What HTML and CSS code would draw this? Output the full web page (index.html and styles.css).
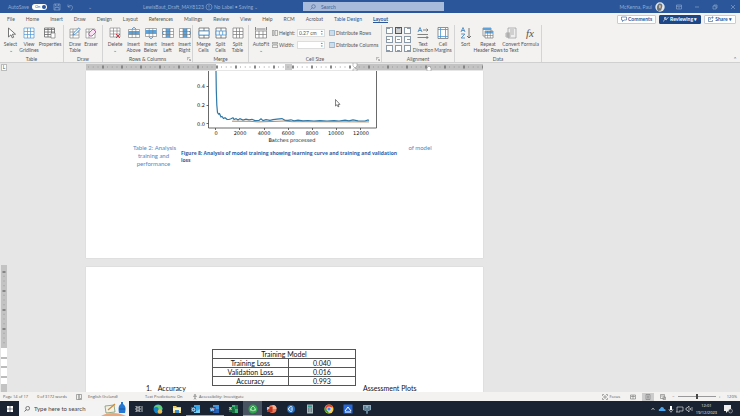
FILE: index.html
```html
<!DOCTYPE html>
<html lang="en">
<head>
<meta charset="utf-8">
<title>Word document</title>
<link rel="stylesheet" href="styles.css">
</head>
<body>
<svg class="defs" aria-hidden="true">
  <symbol id="grid" viewBox="0 0 12 12"><path d="M1 1h10v10H1z" fill="#fff"/><path d="M1 1h10v10H1zM1 4.500h10M1 7.500h10M4.500 1v10M7.500 1v10" fill="none" stroke="currentColor" stroke-width=".7"/></symbol>
  <symbol id="insert" viewBox="0 0 12 12"><path d="M.5 2.500h11v8H.5z" fill="#fff" stroke="#777" stroke-width=".6"/><path d="M.5 4h11v3.500H.5z" fill="#5ba3dc"/><path d="M4.200 2.500v8M7.800 2.500v8M.5 7.500h11" stroke="#777" stroke-width=".6"/></symbol>
  <symbol id="insertcol" viewBox="0 0 12 12"><path d="M.5 1.500h11v9H.5z" fill="#fff" stroke="#777" stroke-width=".6"/><path d="M4 1.500h4v9H4z" fill="#5ba3dc"/><path d="M.5 4.500h11M.5 7.500h11M8 1.500v9M4 1.500v9" stroke="#777" stroke-width=".6"/></symbol>
</svg>

<header class="titlebar">
  <div class="quick">
    <span>AutoSave</span>
    <button class="toggle" aria-label="AutoSave on"><span>On</span><i></i></button>
    <svg class="i8" viewBox="0 0 8 8"><path d="M1 1h6v6H1zM2.500 1v2h3V1M2 7V4.500h4V7" class="ln"/></svg>
    <svg class="i8 undo" viewBox="0 0 8 8"><path d="M1 1.500v2.500h2.500M1 4c2-3 6-1 4 2L4 7.500" class="ln"/></svg>
    <span class="more">⌄</span>
  </div>
  <div class="docname">LewisBaut_Draft_MAY8123 <svg class="i8" viewBox="0 0 8 8"><circle cx="4" cy="4" r="3" class="ln"/><path d="M4 2v2.500M4 5.300v.6" class="ln"/></svg> No Label • Saving ⌄</div>
  <label class="find"><svg class="i6" viewBox="0 0 6 6"><circle cx="3.500" cy="2.500" r="1.800" class="ln"/><path d="M2.200 3.800L.5 5.500" class="ln"/></svg><input placeholder="Search" aria-label="Search"></label>
  <div class="account">
    <span>McKenna, Paul</span>
    <svg class="i10" viewBox="0 0 10 10"><circle cx="5" cy="5" r="4.700" fill="#dfe5e8"/><path d="M4 1.500c3-.6 4 1.500 3 4L6 8.500 3 9C1 6 2 3 4 1.500z" fill="#6c7478"/><path d="M4 3l2 .5-.5 3L4 6z" fill="#d9b7a2"/></svg>
    <svg class="i8 win" viewBox="0 0 8 8"><path d="M1.500 2h5v4h-5zM1.500 3.300h5M4 4v1.500" class="ln"/></svg>
    <svg class="i8 win" viewBox="0 0 8 8"><path d="M2 4h4" class="ln"/></svg>
    <svg class="i8 win" viewBox="0 0 8 8"><path d="M2 3h3v3H2zM3 3V2h3v3H5" class="ln"/></svg>
    <svg class="i8 win" viewBox="0 0 8 8"><path d="M2 2l4 4M6 2L2 6" class="ln"/></svg>
  </div>
</header>

<nav class="tabs">
  <a href="#">File</a><a href="#">Home</a><a href="#">Insert</a><a href="#">Draw</a><a href="#">Design</a><a href="#">Layout</a><a href="#">References</a><a href="#">Mailings</a><a href="#">Review</a><a href="#">View</a><a href="#">Help</a><a href="#">RCM</a><a href="#">Acrobat</a><a href="#" class="ctx">Table Design</a><a href="#" class="ctx on">Layout</a>
  <div class="actions">
    <button><svg class="i6" viewBox="0 0 6 6"><path d="M.5 1h5v3H3L1.500 5.500V4h-1z" class="ln"/></svg>Comments</button>
    <button class="review"><svg class="i6" viewBox="0 0 6 6"><path d="M.5 5.500C1 3 3 3 4 4M1.500 1.500h1.500v1.500H1.500zM3.500 3.500L5.500 1" class="ln"/></svg>Reviewing ▾</button>
    <button><svg class="i6" viewBox="0 0 6 6"><path d="M2.500 1.500H.5v4h4V4M2 4c0-2 1-2.500 3-2.500M4 .5l1.300 1L4 2.500" class="ln"/></svg>Share ▾</button>
  </div>
</nav>

<section class="ribbon">
  <div class="group g-table">
    <div class="tools">
      <button><svg class="ic" viewBox="0 0 12 12"><path d="M3.500 1v9L6 7.800l1.200 3 1.500-.6L7.400 7.200H10.500z" fill="#fff" stroke="#555" stroke-width=".8"/></svg>Select<br>⌄</button>
      <button class="w20"><svg class="ic blue"><use href="#grid"/></svg>View Gridlines</button>
      <button class="w22"><svg class="ic" viewBox="0 0 12 12"><path d="M.5 1h10v9H.5z" fill="#fff"/><path d="M.5 1h10v9H.5zM.5 2.500h10M.5 5h10M.5 7.500h10M4 1v9M7.500 1v9" fill="none" stroke="#666" stroke-width=".8"/><path d="M7 6h4v5H7z" fill="#fff" stroke="#666" stroke-width=".6"/></svg>Properties</button>
    </div><h2>Table</h2>
  </div>
  <div class="group g-draw">
    <div class="tools">
      <button class="w18"><svg class="ic" viewBox="0 0 12 12"><path d="M1 2h9v9H1zM1 5h9M1 8h9M4 2v9" fill="#fff" stroke="#777" stroke-width=".6"/><path d="M4 8l1-2.500L10 .8l1.300 1.300L6.500 7z" fill="#fff" stroke="#3883c4" stroke-width=".8"/></svg>Draw Table</button>
      <button class="w14"><svg class="ic" viewBox="0 0 12 12"><path d="M1 2h9v9H1zM1 5h9M4 2v9" fill="#fff" stroke="#777" stroke-width=".6"/><path d="M4 6l4-4 3 3-4 4H5L4 8z" fill="#f7e3f2" stroke="#a44d97" stroke-width=".8"/></svg>Eraser</button>
    </div><h2>Draw</h2>
  </div>
  <div class="group g-rows">
    <div class="tools">
      <button class="w20"><svg class="ic" viewBox="0 0 12 12"><path d="M1 1h10v9H1zM1 4h10M1 7h10M4.500 1v9M8 1v9" fill="#fff" stroke="#777" stroke-width=".6"/><path d="M7 7l4 4M11 7l-4 4" stroke="#d43c4c" stroke-width="1"/></svg>Delete<br>⌄</button>
      <button><svg class="ic" viewBox="0 0 12 12"><use href="#insert"/><path d="M4 2l2-1.700L8 2" class="ar"/></svg>Insert Above</button>
      <button><svg class="ic" viewBox="0 0 12 12"><use href="#insert" y="-1"/><path d="M4 10l2 1.700L8 10" class="ar"/></svg>Insert Below</button>
      <button><svg class="ic" viewBox="0 0 12 12"><use href="#insertcol"/><path d="M2 4L.4 6 2 8" class="ar"/></svg>Insert Left</button>
      <button><svg class="ic" viewBox="0 0 12 12"><use href="#insertcol"/><path d="M10 4l1.600 2L10 8" class="ar"/></svg>Insert Right</button>
    </div><h2>Rows &amp; Columns</h2>
    <svg class="launch" viewBox="0 0 5 5"><path d="M.5 4V.5H4M2 2l2.500 2.500M4.500 2.500v2h-2" class="gr"/></svg>
  </div>
  <div class="group g-merge">
    <div class="tools">
      <button><svg class="ic" viewBox="0 0 12 12"><path d="M1 1h10v10H1zM1 4h10M1 8h10M6 1v3M6 8v3" fill="#fff" stroke="#666" stroke-width=".8"/><path d="M1 4h10v4H1z" fill="#fff" stroke="#4a96d2" stroke-width=".8"/></svg>Merge Cells</button>
      <button><svg class="ic" viewBox="0 0 12 12"><path d="M1 1h10v10H1zM6 1v10" fill="#fff" stroke="#666" stroke-width=".8"/><path d="M1 4h10v4H1zM4.300 4v4M7.700 4v4" fill="#fff" stroke="#4a96d2" stroke-width=".8"/></svg>Split Cells</button>
      <button><svg class="ic"><use href="#grid"/></svg>Split Table</button>
    </div><h2>Merge</h2>
  </div>
  <div class="group g-size">
    <div class="tools">
      <button class="w20"><svg class="ic" viewBox="0 0 12 12"><path d="M.5 4h11v7H.5zM.5 7.500h11M4 4v7M8 4v7" fill="#fff" stroke="#777" stroke-width=".7"/><path d="M.5 0v3.500M11.500 0v3.500M1.500 2h9" stroke="#555" stroke-width=".7"/></svg>AutoFit<br>⌄</button>
      <div class="fields">
        <label for="h"><svg class="i6" viewBox="0 0 6 6"><path d="M.4.4h1.500v5.200H.4zM3 .4h2.600v5.200H3z" class="gr"/></svg>Height:</label>
        <span class="spin"><input id="h" value="0.27 cm"><i>▴<br>▾</i></span>
        <button class="dist"><svg class="i6" viewBox="0 0 6 6"><path d="M.4.400h5.200v5.200H.4zM.4 2h5.200M.4 4h5.200" class="bl"/></svg>Distribute Rows</button>
        <label for="w"><svg class="i6" viewBox="0 0 6 6"><path d="M.4.4h5.200v1.500H.4zM.4 3h5.200v2.600H.4z" class="gr"/></svg>Width:</label>
        <span class="spin"><input id="w" value=""><i>▴<br>▾</i></span>
        <button class="dist"><svg class="i6" viewBox="0 0 6 6"><path d="M.4.400h5.200v5.200H.4zM2 .4v5.200M4 .4v5.200" class="bl"/></svg>Distribute Columns</button>
      </div>
    </div><h2>Cell Size</h2>
    <svg class="launch" viewBox="0 0 5 5"><path d="M.5 4V.5H4M2 2l2.500 2.500M4.500 2.500v2h-2" class="gr"/></svg>
  </div>
  <div class="group g-align">
    <div class="tools">
      <div class="aligns">
        <button aria-label="Top left"><i class="t l"></i></button><button class="sel" aria-label="Top centre"><i class="t"></i></button><button aria-label="Top right"><i class="t r"></i></button>
        <button aria-label="Middle left"><i class="l"></i></button><button aria-label="Middle centre"><i></i></button><button aria-label="Middle right"><i class="r"></i></button>
        <button aria-label="Bottom left"><i class="b l"></i></button><button aria-label="Bottom centre"><i class="b"></i></button><button aria-label="Bottom right"><i class="b r"></i></button>
      </div>
      <button class="w20"><svg class="ic" viewBox="0 0 12 12"><path d="M1 5l2-4.500L5 5M1.800 3.500h2.400" class="ar"/><path d="M6 3h5M9.500 1.500L11 3 9.500 4.500M.5 7.500h10.500M.5 10.500h10.500M9.500 9L11 10.500 9.500 12" fill="none" stroke="#666" stroke-width=".8"/></svg>Text Direction</button>
      <button class="w20"><svg class="ic" viewBox="0 0 12 12"><path d="M1 .500h10v11H1z" fill="#fff" stroke="#777" stroke-width=".8"/><path d="M3.500 1v10M8.500 1v10M1 2.500h10M1 9.500h10" stroke="#4a96d2" stroke-width=".8"/></svg>Cell Margins</button>
    </div><h2>Alignment</h2>
  </div>
  <div class="group g-data">
    <div class="tools">
      <button><svg class="ic" viewBox="0 0 12 12"><path d="M1 5l2-4.500L5 5M1.700 3.500h2.600" class="ar"/><path d="M1.200 7h3.600L1.200 11h3.800" class="ar" /><path d="M9 1v10M7 9l2 2 2-2" fill="none" stroke="#555" stroke-width=".8"/></svg>Sort</button>
      <button class="w28"><svg class="ic" viewBox="0 0 12 12"><path d="M1 1h8v8H1z" fill="#fff" stroke="#777" stroke-width=".7"/><path d="M1 1h8v2H1z" fill="#5ba3dc"/><path d="M3 4h8v7H3z" fill="#fff" stroke="#777" stroke-width=".7"/><path d="M3 4h8v2.500H3z" fill="#5ba3dc"/><path d="M3 8.500h8M5.600 4v7M8.300 4v7" stroke="#777" stroke-width=".6"/></svg><span>Repeat<br>Header Rows</span></button>
      <button class="w18"><svg class="ic" viewBox="0 0 12 12"><path d="M3 1h8v10H3z" fill="#eee" stroke="#999" stroke-width=".7"/><path d="M5 3h4M5 5h4M6 7h3M1 6h4v4H1zM1 8h4M3 6v4" fill="none" stroke="#999" stroke-width=".7"/></svg>Convert to Text</button>
      <button class="w20"><span class="fx">fx</span>Formula</button>
    </div><h2>Data</h2>
  </div>
  <button class="collapse" aria-label="Collapse ribbon">⌃</button>
</section>

<div class="ruler">
  <button class="tabstop" aria-label="Tab stop">L</button>
  <svg class="scale" viewBox="0 0 397 8" aria-hidden="true">
    <path d="M0 1h397v6H0z" fill="#c3c3c3"/><path d="M130 1h139v6H130z" fill="#fff"/><path d="M199 1h7v6h-7z" fill="#c9c9c9"/>
    <path d="M2 4h395" stroke="#999" stroke-width="1" stroke-dasharray="1 3.750"/>
    <path d="M16 4h381" stroke="#858585" stroke-width="3" stroke-dasharray="2 17"/>
    <path d="M267 0h4v3l-2 2-2-2zM267 6h4v2h-4zM341 5l2-2 2 2v3h-4z" fill="#fff" stroke="#888" stroke-width=".5"/>
  </svg>
</div>

<main class="workspace">
  <svg class="vruler" viewBox="0 0 6 127" aria-hidden="true"><path d="M0 0h6v127H0z" fill="#c3c3c3"/><path d="M0 83h6v36H0z" fill="#fff"/><path d="M0 92h6v2H0zM0 101h6v2H0zM0 111h6v2H0z" fill="#bbb"/><path d="M3 6v76" stroke="#999" stroke-width="1" stroke-dasharray="1 3.750"/><path d="M3 6v76" stroke="#858585" stroke-width="3" stroke-dasharray="2 17"/></svg>
  <div class="pages">
    <article class="page first">
      <svg class="chart" viewBox="194 71 186 73">
        <path d="M208.500 71v57h168V71" fill="none" stroke="#444" stroke-width=".8"/>
        <path d="M206.500 86.500h2M206.500 105.500h2M206.500 123.500h2M215.500 128v2M239.500 128v2M264.500 128v2M288.500 128v2M312.500 128v2M336.500 128v2M360.500 128v2" stroke="#444" stroke-width=".8"/>
        <path d="M216 71L216.300 90 216.800 105 217.500 112.500 218.500 114 219.500 113.500 221 117 222 116.500 223.500 118.500 225 117.800 227 119.300 229 119.500 231 118.800 233 117.800 234 119.500 236 118.600 238 120 240 118.600 243 120 246 119.200 249 119.800 252 119.300 255 120.600 259 120.400 261 118.800 263 120.600 266 119.600 270 120.300 273 119.700 277 119.200 282 118.600 285 120.300 288 120.400 291 119.800 294 120.800 298 120.200 303 120.900 308 120.500 314 121 320 120.600 327 121 334 120.600 339 121 345 120.200 349 120.800 353 119.800 358 120.800 365 121 368 120 369 120.500" fill="none" stroke="#2f79a8" stroke-width="1.200"/>
        <path d="M232 121.200L250 121.300 258 121.900 272 121.500 284 121 292 121.700 369 121.900" fill="none" stroke="#b07a4c" stroke-width=".9"/>
        <g class="axis"><text x="205" y="88" text-anchor="end">0.4</text><text x="205" y="107" text-anchor="end">0.2</text><text x="205" y="126" text-anchor="end">0.0</text>
        <g text-anchor="middle"><text x="216" y="135">0</text><text x="240" y="135">2000</text><text x="264" y="135">4000</text><text x="288" y="135">6000</text><text x="312" y="135">8000</text><text x="336" y="135">10000</text><text x="361" y="135">12000</text><text x="292" y="142">Batches processed</text></g></g>
        <path d="M335.500 99.500v6.500l1.500-1.300 1 2.200 1-.5-1-2h2z" fill="#fff" stroke="#333" stroke-width=".6"/>
      </svg>
      <div class="captions">
        <p class="side">Table 2: Analysis<br>training and<br>performance</p>
        <p class="figcap">Figure 8: Analysis of model training showing learning curve and training and validation<br>loss</p>
        <p class="side">of model</p>
      </div>
    </article>
    <article class="page second">
      <p class="item"><span>1.</span>Accuracy</p>
      <table>
        <tr><th colspan="2">Training Model</th></tr>
        <tr><td>Training Loss</td><td>0.040</td></tr>
        <tr><td>Validation Loss</td><td>0.016</td></tr>
        <tr><td>Accuracy</td><td>0.993</td></tr>
      </table>
      <p class="after">Assessment Plots</p>
    </article>
  </div>
</main>

<footer class="status">
  <span class="s1">Page 14 of 17</span><span class="s2">0 of 3172 words</span>
  <svg class="i6" viewBox="0 0 6 6"><path d="M.5.500h2.500v5H.5zM3 .500h2.500v5H3zM4 4l1 1" class="gr"/></svg>
  <span class="s3">English (Ireland)</span><span class="s4">Text Predictions: On</span>
  <svg class="i6" viewBox="0 0 6 6"><circle cx="3" cy="1" r=".7" class="gr"/><path d="M1 2.300h4M3 2v1.500L2 5.500M3 3.500l1 2" class="gr"/></svg>
  <span class="s5">Accessibility: Investigate</span>
  <div class="view">
    <span class="focus"><svg class="i6" viewBox="0 0 6 6"><path d="M.5 2V.5H2M4 .5h1.500V2M5.500 4v1.500H4M2 5.500H.5V4M2 2h2v2H2z" class="gr"/></svg> Focus</span>
    <button aria-label="Read mode"><svg class="i6" viewBox="0 0 6 6"><path d="M.5 1h5v4h-5zM3 1v4M1 2.500h4" class="gr"/></svg></button>
    <button class="cur" aria-label="Print layout"><svg class="i6" viewBox="0 0 6 6"><path d="M1 .500h4v5H1zM2 2h2M2 3h2M2 4h2" class="gr"/></svg></button>
    <button aria-label="Web layout"><svg class="i6" viewBox="0 0 6 6"><path d="M.5.500h4v4h-4zM1 2h3M3 3h2.500v2.500H3z" class="gr"/></svg></button>
    <span>−</span><input type="range" aria-label="Zoom" value="50"><span>+</span><span class="pct">120%</span>
  </div>
</footer>

<footer class="taskbar">
  <button class="start" aria-label="Start"><svg class="i6" viewBox="0 0 6 6"><path d="M0 0h2.700v2.700H0zM3.300 0H6v2.700H3.300zM0 3.300h2.700V6H0zM3.300 3.300H6V6H3.300z" fill="#fff"/></svg></button>
  <label class="tsearch"><svg class="i6" viewBox="0 0 6 6"><circle cx="3.700" cy="2.300" r="1.900" fill="none" stroke="#333" stroke-width=".6"/><path d="M2.300 3.700L.5 5.500" stroke="#333" stroke-width=".7"/></svg><input placeholder="Type here to search" aria-label="Type here to search">
    <svg class="art" viewBox="0 0 28 15"><path d="M0 15c6-4 18-4 25 0z" fill="#e9a77d"/><path d="M4 5l9-1 1 7-9 1z" fill="#f4f1e4" stroke="#6f8b62" stroke-width=".7"/><path d="M7 9l7-6" stroke="#cc8b3c" stroke-width="1.200"/><path d="M18 12c-1-6 0-8 2-9V1h2v2c3 2 3 5 2 9z" fill="#2478d3"/><path d="M18 8h6" stroke="#1556a4"/></svg></label>
  <div class="apps">
    <button aria-label="Task view"><svg class="i10" viewBox="0 0 10 10"><path d="M2 2v1h4V2M2 8V7h4v1M2 4h4v2H2zM8 2v6" fill="none" stroke="#ddd" stroke-width=".8"/></svg></button>
    <button aria-label="Edge"><svg class="i10" viewBox="0 0 10 10"><circle cx="5" cy="5" r="4.500" fill="#1684c9"/><path d="M.8 4C2-.5 9-.5 9.500 4.500c0 2-3 2-4 1C6 3 3 2 .8 4z" fill="#61cf75"/><circle cx="7" cy="7.500" r="2.300" fill="#e8bd58"/></svg></button>
    <button aria-label="Files"><svg class="i10" viewBox="0 0 10 10"><path d="M1 2h3l1 1h4v6H1z" fill="#f5cd5b"/><path d="M1 4h8v3H1z" fill="#fff0ad"/><path d="M3 6h4v3H3z" fill="#448ec9"/></svg></button>
    <button class="open" aria-label="Outlook"><svg class="i10" viewBox="0 0 10 10"><path d="M3 1h6v8H3z" fill="#38a8e9"/><path d="M3 5l3 2 3-2v4H3z" fill="#78cdf5"/><path d="M0 3h5v5H0z" fill="#1267b5"/><circle cx="2.500" cy="5.500" r="1.300" fill="none" stroke="#fff" stroke-width=".8"/></svg></button>
    <button class="open" aria-label="Word"><svg class="i10" viewBox="0 0 10 10"><path d="M3 1h6v8H3z" fill="#4196df"/><path d="M3 5h6v4H3z" fill="#2863b8"/><path d="M0 3h5.500v5H0z" fill="#1b4f9d"/></svg><b>W</b></button>
    <button aria-label="Excel"><svg class="i10" viewBox="0 0 10 10"><path d="M3 1h6v8H3z" fill="#39b875"/><path d="M6 1h3v4H6zM3 5h3v4H3z" fill="#21794a"/><path d="M0 3h5.500v5H0z" fill="#176a40"/></svg><b>X</b></button>
    <button class="open active" aria-label="Recorder"><svg class="i10" viewBox="0 0 10 10"><circle cx="5" cy="5" r="4.500" fill="#2ca74c"/><path d="M3 7V4l2-2 2 2v3M2 5l3 2 3-2" fill="none" stroke="#c8efcc" stroke-width=".8"/></svg></button>
    <button aria-label="PowerPoint"><svg class="i10" viewBox="0 0 10 10"><circle cx="5.500" cy="5" r="4" fill="#ee7655"/><path d="M5.500 1a4 4 0 0 1 4 4h-4z" fill="#ffae8d"/><path d="M0 3h5.500v5H0z" fill="#bd3322"/></svg><b>P</b></button>
    <button aria-label="Circle app"><svg class="i10" viewBox="0 0 10 10"><circle cx="5" cy="5" r="4" fill="#216cc0"/><path d="M6.500 3.300a2.300 2.300 0 1 0 0 3.400M4.500 5H7" fill="none" stroke="#fff"/></svg></button>
    <button aria-label="Calculator"><svg class="i10" viewBox="0 0 10 10"><path d="M2 .5h6v9H2z" fill="#a7b9bd"/><path d="M3 1.500h4v2H3z" fill="#2f9b8f"/><path d="M3 5h4M3 7h4" stroke="#42535a" stroke-dasharray="1 .5"/></svg></button>
    <button aria-label="Chrome"><svg class="i10" viewBox="0 0 10 10"><circle cx="5" cy="5" r="4.500" fill="#ffce43"/><path d="M1 3a4.500 4.500 0 0 1 8.200.2H5L3.500 6z" fill="#e84335"/><path d="M1 3l3 4 1 2.500A4.500 4.500 0 0 1 1 3z" fill="#36a853"/><circle cx="5" cy="5" r="2" fill="#4285f4" stroke="#fff" stroke-width=".6"/></svg></button>
    <button aria-label="Drive"><svg class="i10" viewBox="0 0 10 10"><path d="M.5.500h9v9h-9z" fill="#2868d8"/><path d="M2 7l3-4 3 4M2 8h6" fill="none" stroke="#fff"/></svg></button>
    <button aria-label="Database"><svg class="i10" viewBox="0 0 10 10"><path d="M1 1h8v5L6 7v2.500H4V7L1 6z" fill="#8ba9bc"/><path d="M3 2v4M7 2v4M5 4v5" stroke="#38566e"/></svg></button>
  </div>
  <div class="tray">
    <svg class="i8" viewBox="0 0 8 8"><path d="M2.500 5L4 3l1.500 2" class="ln"/></svg>
    <svg class="i8" viewBox="0 0 8 8"><path d="M1 6c-1-2 1-2 1-2 1-3 4-2 4 0 2 0 2 2 1 2z" fill="#49a5ed"/></svg>
    <svg class="i8" viewBox="0 0 8 8"><path d="M3 1h2v4H3z" fill="#fff"/><path d="M2 4c0 3 4 3 4 0M4 6v1.500" class="ln"/></svg>
    <svg class="i8" viewBox="0 0 8 8"><path d="M1 2h6v4H3M1 2v5M0 7h4" class="ln"/></svg>
    <svg class="i8" viewBox="0 0 8 8"><path d="M1 3h1l2-2v6L2 5H1zM5.500 3v2M7 2v4" class="ln"/></svg>
    <time>12:01<br>19/12/2023</time>
    <svg class="i10" viewBox="0 0 10 10"><path d="M1 1h7v6H5L3 9V7H1z" fill="#eee"/><circle cx="7.500" cy="7" r="2" fill="#26303d" stroke="#ccc" stroke-width=".5"/></svg>
  </div>
</footer>
</body>
</html>
```
FILE: styles.css
```css
* { box-sizing: border-box; }
body { margin: 0; height: 100vh; display: flex; flex-direction: column; overflow: hidden; background: #e6e6e6; color: #555; font: 5px/6px Lato, "Open Sans", sans-serif; }
button, input { font: inherit; color: inherit; border: 0; padding: 0; margin: 0; background: none; min-width: 0; outline: 0; }
p, h2 { margin: 0; font-weight: 400; }
a { color: inherit; text-decoration: none; }
svg { flex: none; display: block; }
.defs { position: absolute; width: 0; height: 0; }
.i6 { width: 6px; height: 6px; }
.i8 { width: 8px; height: 8px; }
.i10 { width: 10px; height: 10px; }
.ln { fill: none; stroke: currentColor; stroke-width: .6; }
.gr { fill: none; stroke: #777; stroke-width: .6; }
.bl { fill: #fff; stroke: #5c8db5; stroke-width: .6; }
.ar { fill: none; stroke: #397fb9; stroke-width: .8; }

.titlebar { flex: none; height: 13px; display: grid; grid-template-columns: 143px 160px 141px 1fr; align-items: center; background: #2b579a; color: #93abd0; }
.quick, .account { display: flex; align-items: center; }
.quick { padding-left: 8px; gap: 3px; }
.toggle { width: 15px; height: 6px; display: flex; align-items: center; justify-content: space-between; border-radius: 3px; background: #fff; color: #2b579a; padding: 0 1px 0 3px; font-size: 4px; }
.toggle i { width: 4px; height: 4px; border-radius: 50%; background: #2b579a; }
.quick .i8 { margin-left: 3px; }
.more { margin-left: 10px; }
.docname { display: flex; align-items: center; gap: 1px; white-space: nowrap; }
.find { height: 9px; display: flex; align-items: center; gap: 5px; padding-left: 7px; background: #a9bbda; color: #3e5f94; }
.find input { flex: 1; }
.find input::placeholder { color: #3e5f94; }
.account { justify-content: flex-end; gap: 3px; padding-right: 3px; }
.account .win { margin-left: 7px; }

.tabs { flex: none; height: 12px; display: flex; align-items: center; gap: 11px; padding: 0 4px 0 7px; background: #f3f2f1; white-space: nowrap; }
.tabs .ctx { color: #2b579a; }
.tabs .on { font-weight: 700; border-bottom: 1px solid #2b579a; margin-top: 1px; }
.actions { margin-left: auto; display: flex; gap: 3px; color: #2b579a; }
.actions button { height: 9px; display: flex; align-items: center; gap: 1px; padding: 0 3px; border: 1px solid #c5cddd; border-radius: 1px; background: #fff; font-weight: 700; }
.actions .review { background: #1d4687; border-color: #1d4687; color: #fff; }

.ribbon { flex: none; height: 38px; display: flex; background: #f3f2f1; border-bottom: 1px solid #d0d0d0; }
.group { position: relative; flex: none; display: flex; flex-direction: column; justify-content: space-between; border-right: 1px solid #d4d4d4; padding: 2px 2px 0; }
.group h2 { font-size: 5px; line-height: 6px; text-align: center; }
.g-table { width: 64px; } .g-draw { width: 39px; } .g-rows { width: 90px; } .g-merge { width: 56px; } .g-size { width: 133px; } .g-align { width: 73px; } .g-data { width: 87px; }
.tools { display: flex; align-items: flex-start; }
.tools > button { flex: none; width: 17px; display: flex; flex-direction: column; align-items: center; text-align: center; line-height: 6px; }
.tools > .w14 { width: 14px; } .tools > .w18 { width: 18px; } .tools > .w20 { width: 20px; } .tools > .w22 { width: 22px; } .tools > .w28 { width: 28px; white-space: nowrap; }
.ic { width: 12px; height: 12px; margin-bottom: 2px; color: #777; }
.ic.blue { color: #4a96d2; }
.launch { position: absolute; right: 1px; bottom: 1px; width: 4px; height: 4px; }
.fields { display: grid; grid-template-columns: 23px 28px auto; gap: 4px 2px; align-items: center; padding: 2px 0 0 1px; white-space: nowrap; }
.fields label, .dist { display: flex; align-items: center; gap: 1px; }
.dist { padding-left: 2px; }
.spin { display: flex; height: 8px; background: #fff; border: 1px solid #ddd; }
.spin input { flex: 1; padding-left: 1px; }
.spin i { font-size: 3px; line-height: 3px; font-style: normal; padding-right: 1px; }
.aligns { display: grid; grid-template-columns: repeat(3, 7px); gap: 2px; padding: 0 2px 0 2px; }
.aligns button { width: 7px; height: 7px; border: 1px solid #8b9aa8; background: #fff; display: flex; align-items: center; justify-content: center; }
.aligns .sel { background: #d0d0d0; border-color: #555; }
.aligns i { width: 3px; height: 1px; background: #8b9aa8; }
.aligns .t { align-self: flex-start; } .aligns .b { align-self: flex-end; } .aligns .l { margin-right: auto; } .aligns .r { margin-left: auto; }
.fx { height: 14px; font: italic 11px/12px "Liberation Serif", serif; }
.collapse { margin: auto 3px 0 auto; }

.ruler { flex: none; height: 8px; display: flex; align-items: center; }
.tabstop { width: 6px; height: 7px; margin: 0 79px 0 1px; background: #fff; border: 1px solid #bbb; line-height: 5px; }
.scale { width: 397px; height: 8px; }
.workspace { flex: 1; min-height: 0; display: flex; align-items: flex-end; overflow: hidden; }
.vruler { width: 6px; height: 127px; margin-left: 1px; }
.pages { align-self: stretch; width: 397px; margin-left: 79px; display: flex; flex-direction: column; gap: 9px; }
.page { background: #fff; color: #111; box-shadow: 0 0 1px #bbb; }
.first { flex: none; height: 187px; }
.chart { width: 186px; height: 73px; margin-left: 108px; }
.axis { font: 5px "DejaVu Sans", sans-serif; fill: #111; }
.captions { display: grid; grid-template-columns: 41px 217px 30px; column-gap: 7px; padding-left: 47px; white-space: nowrap; color: #5586c0; }
.side { font-size: 6px; line-height: 8px; text-align: center; }
.figcap { font: 700 5px/7px "Open Sans", sans-serif; color: #2f63a8; padding-top: 6px; }
.second { flex: 1; display: flex; align-items: flex-end; font-size: 7px; line-height: 8px; white-space: nowrap; }
.item { width: 126px; padding-left: 60px; }
.item span { margin-right: 6px; }
table { width: 144px; border-collapse: collapse; margin-bottom: 6px; }
th, td { height: 9px; padding: 0; border: 1px solid #555; text-align: center; font-weight: 400; line-height: 8px; }
td:first-child { width: 53%; }
.after { margin-left: 7px; }

.status { flex: none; height: 9px; display: flex; align-items: center; padding: 0 3px; background: #f3f2f1; color: #555; font: 4px/6px "Open Sans", sans-serif; white-space: nowrap; }
.s1 { width: 34px; } .s2 { width: 39px; } .s3 { width: 63px; padding-left: 6px; } .s4 { width: 47px; } .s5 { padding-left: 1px; }
.view { margin-left: auto; display: flex; align-items: center; gap: 3px; }
.focus { display: flex; gap: 1px; margin-right: 4px; }
.view button { width: 12px; height: 8px; display: flex; align-items: center; justify-content: center; }
.view .cur { background: #ccc; }
.view input { appearance: none; width: 38px; height: 1px; background: #999; }
.view input::-webkit-slider-thumb { appearance: none; width: 2px; height: 5px; background: #444; }
.pct { padding-left: 3px; }

.taskbar { flex: none; height: 15px; display: flex; align-items: stretch; background: #1a2331; color: #eee; }
.start { width: 19px; display: flex; align-items: center; justify-content: center; }
.tsearch { width: 110px; display: flex; align-items: center; gap: 4px; padding-left: 5px; background: #f3f3f3; color: #444; font-size: 6px; }
.tsearch input { flex: 1; }
.tsearch input::placeholder { color: #444; }
.art { width: 28px; height: 15px; }
.apps { display: flex; }
.apps button { position: relative; width: 19px; display: flex; align-items: center; justify-content: center; }
.apps b { position: absolute; left: 5px; top: 5px; font-size: 4px; line-height: 6px; color: #fff; }
.apps .open { border-bottom: 1px solid #69b1e6; border-top: 1px solid transparent; }
.apps .active { background: #485461; }
.tray { margin-left: auto; display: flex; align-items: center; gap: 1px; padding-right: 7px; }
time { font: 4px/7px "Open Sans", sans-serif; text-align: center; margin: 0 5px 0 2px; }
```
